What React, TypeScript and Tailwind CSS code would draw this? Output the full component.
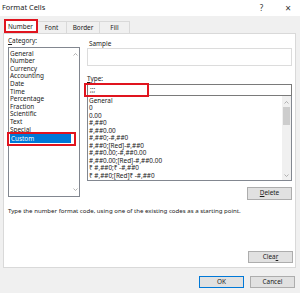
import React from "react";

const categories = [
  "General",
  "Number",
  "Currency",
  "Accounting",
  "Date",
  "Time",
  "Percentage",
  "Fraction",
  "Scientific",
  "Text",
  "Special",
  "Custom",
];

const formats = [
  "General",
  "0",
  "0.00",
  "#,##0",
  "#,##0.00",
  "#,##0;-#,##0",
  "#,##0;[Red]-#,##0",
  "#,##0.00;-#,##0.00",
  "#,##0.00;[Red]-#,##0.00",
  "₹ #,##0;₹ -#,##0",
  "₹ #,##0;[Red]₹ -#,##0",
];

function Chevron({ up }: { up?: boolean }): React.ReactElement {
  return (
    <svg width="5" height="3" viewBox="0 0 5 3" className="block">
      <path
        d={up ? "M0.5 2.5 L2.5 0.5 L4.5 2.5" : "M0.5 0.5 L2.5 2.5 L4.5 0.5"}
        fill="none"
        stroke="#a0a0a0"
        strokeWidth="0.8"
      />
    </svg>
  );
}

function Btn({
  children,
  primary,
  tall,
}: {
  children: React.ReactNode;
  primary?: boolean;
  tall?: boolean;
}): React.ReactElement {
  return (
    <div
      className={`w-[45px] ${tall ? "h-[13px]" : "h-[12px]"} flex items-center justify-center bg-[#e1e1e1] border ${
        primary ? "border-[#0078d7]" : "border-[#adadad]"
      }`}
    >
      <span>{children}</span>
    </div>
  );
}

export default function App(): React.ReactElement {
  return (
    <div
      className="w-[300px] h-[293px] bg-[#f0f0f0] text-[6.4px] leading-[7.6px] text-[#1a1a1a] overflow-hidden flex flex-col"
      style={{ fontFamily: '"Noto Sans", "Open Sans", sans-serif' }}
    >
      {/* title bar */}
      <div className="h-[16px] bg-white flex items-center pl-[2px] shrink-0">
        <span className="text-[7.4px] flex-1">Format Cells</span>
        <span className="text-[8px] text-[#333] mr-[22px]">?</span>
        <span className="text-[10px] text-[#333] mr-[9px] leading-none">×</span>
      </div>

      {/* tabs */}
      <div className="flex items-end pl-[4px] h-[17px] shrink-0">
        <div className="relative w-[33px] h-[14px] bg-white border border-b-0 border-[#d9d9d9] flex items-center justify-center">
          Number
          <div className="absolute -left-[1px] -top-[1px] w-[34px] h-[14px] border-2 border-[#e0141e]" />
        </div>
        <div className="w-[30px] h-[12px] border border-b-0 border-l-0 border-[#d9d9d9] flex items-center justify-center">
          Font
        </div>
        <div className="w-[33px] h-[12px] border border-b-0 border-l-0 border-[#d9d9d9] flex items-center justify-center">
          Border
        </div>
        <div className="w-[30px] h-[12px] border border-b-0 border-l-0 border-[#d9d9d9] flex items-center justify-center">
          Fill
        </div>
      </div>

      {/* panel */}
      <div className="mx-[3px] w-[293px] h-[235px] bg-white border border-[#d9d9d9] flex flex-col shrink-0">
        <div className="flex pl-[4px] pt-[3px]">
          {/* category column */}
          <div className="w-[72px] flex flex-col">
            <span>
              <span className="underline">C</span>ategory:
            </span>
            <div className="mt-[2px] h-[150px] border border-[#828790] flex">
              <div className="flex-1 pt-[2px] flex flex-col">
                {categories.map((c) =>
                  c === "Custom" ? (
                    <div key={c} className="relative mt-[1px]">
                      <div className="ml-[1px] w-[61px] bg-[#0078d7] text-white pl-[1px] h-[9px] leading-[9px]">
                        {c}
                      </div>
                      <div className="absolute -left-[2px] -top-[2px] w-[69px] h-[14px] border-2 border-[#e0141e]" />
                    </div>
                  ) : (
                    <div key={c} className="pl-[1px]">
                      {c}
                    </div>
                  )
                )}
              </div>
              <div className="w-[9px] flex flex-col items-center justify-between py-[5px]">
                <Chevron up />
                <Chevron />
              </div>
            </div>
          </div>

          {/* right column */}
          <div className="ml-[5px] w-[207px] flex flex-col">
            <div className="relative h-[37px] pt-[11px]">
              <span className="absolute left-[3px] top-[3px] bg-white px-[1px]">Sample</span>
              <div className="ml-[2px] h-[18px] border border-[#dcdcdc]" />
            </div>
            <span className="ml-[2px] mt-[1px]">
              <span className="underline">T</span>ype:
            </span>
            <div className="relative ml-[2px] mt-[1px] h-[12px] border border-[#7a7a7a] flex items-center pl-[2px]">
              ;;;
              <div className="absolute -left-[4px] -top-[2px] w-[65px] h-[14px] border-2 border-[#e0141e]" />
            </div>
            <div className="ml-[2px] h-[85px] border border-[#828790] border-t-0 flex">
              <div className="flex-1 pt-[1px] pl-[1px] flex flex-col leading-[7.5px] overflow-hidden">
                {formats.map((f) => (
                  <div key={f} className="whitespace-nowrap">
                    {f}
                  </div>
                ))}
              </div>
              <div className="w-[9px] bg-[#f0f0f0] flex flex-col items-center pt-[5px] pb-[3px]">
                <Chevron up />
                <div className="mt-[3px] w-[7px] h-[18px] bg-[#cdcdcd]" />
                <div className="flex-1" />
                <Chevron />
              </div>
            </div>
            <div className="flex justify-end mt-[6px]">
              <Btn tall>
                <span className="underline">D</span>elete
              </Btn>
            </div>
          </div>
        </div>

        <div className="pl-[4px] mt-[7px] text-[6.1px]">
          Type the number format code, using one of the existing codes as a starting point.
        </div>
        <div className="flex-1" />
        <div className="flex justify-end pr-[2px] mb-[4px]">
          <Btn>
            Clea<span className="underline">r</span>
          </Btn>
        </div>
      </div>

      {/* dialog buttons */}
      <div className="flex justify-end gap-[6px] pr-[5px] mt-[8px]">
        <Btn primary>OK</Btn>
        <Btn>Cancel</Btn>
      </div>
    </div>
  );
}
